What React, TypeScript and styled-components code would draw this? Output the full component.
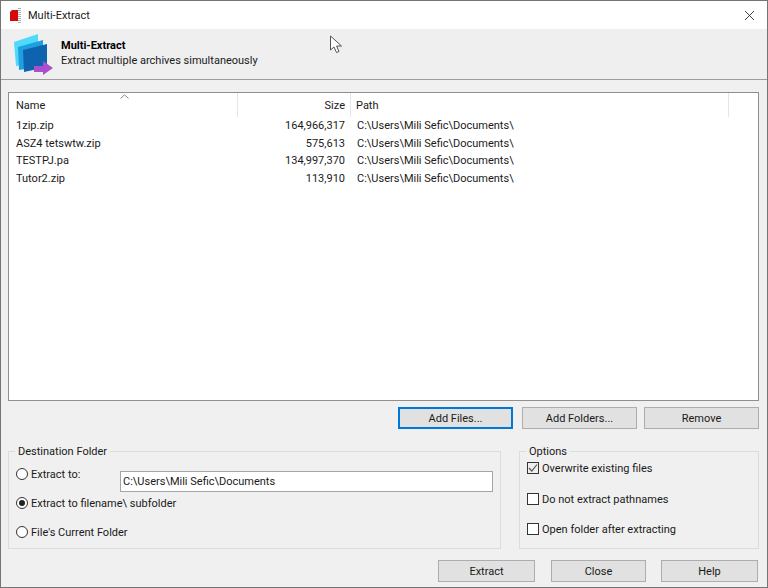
import React from 'react';
import styled, { createGlobalStyle } from 'styled-components';
import { X } from 'lucide-react';

const GlobalStyle = createGlobalStyle`
    html, body {
        margin: 0;
        padding: 0;
        background: #f0f0f0;
    }
    * {
        box-sizing: border-box;
    }
`;

const Window = styled.div`
    position: relative;
    width: 768px;
    height: 588px;
    display: flex;
    flex-direction: column;
    background: #f0f0f0;
    border: 1px solid #747474;
    font-family: Roboto, 'Noto Sans', sans-serif;
    font-size: 11px;
    color: #1a1a1a;
    overflow: hidden;
`;

const TitleBar = styled.div`
    flex: none;
    height: 28px;
    display: flex;
    align-items: center;
    padding: 0 9px 0 8px;
    background: #fff;
`;

const TitleText = styled.div`
    flex: 1;
    margin-left: 6px;
`;

const Banner = styled.div`
    flex: none;
    height: 51px;
    display: flex;
    align-items: flex-start;
    padding: 0 12px;
    background: #efefef;
    border-bottom: 1px solid #9c9c9c;
`;

const BannerText = styled.div`
    margin-left: 7px;
    padding-top: 9px;
    line-height: 15px;
`;

const BannerTitle = styled.div`
    font-weight: 700;
    color: #000;
`;

const Body = styled.div`
    flex: 1;
    display: flex;
    flex-direction: column;
    padding: 12px 8px 0 7px;
`;

const ListBox = styled.div`
    position: relative;
    height: 309px;
    background: #fff;
    border: 1px solid #8f8f8f;
`;

const ListHeader = styled.div`
    display: grid;
    grid-template-columns: 229px 113px 378px 1fr;
    height: 24px;
`;

const HeaderCell = styled.div<{ $right?: boolean; $inset?: number }>`
    display: flex;
    align-items: center;
    justify-content: ${(p) => (p.$right ? 'flex-end' : 'flex-start')};
    padding: 0 5px 0 ${(p) => p.$inset ?? 6}px;
    border-right: 1px solid #e5e5e5;
    &:last-child {
        border-right: none;
    }
`;

const SortCaret = styled.svg`
    position: absolute;
    left: 111px;
    top: 1px;
`;

const FileRow = styled.div`
    display: grid;
    grid-template-columns: 229px 113px 378px;
    height: 17.6px;
    line-height: 17.6px;
`;

const NameCell = styled.div`
    padding-left: 7px;
`;

const SizeCell = styled.div`
    padding-right: 6px;
    text-align: right;
`;

const PathCell = styled.div`
    padding-left: 6px;
`;

const ListButtons = styled.div`
    display: flex;
    justify-content: flex-end;
    margin-top: 6px;
`;

const Button = styled.div<{ $width: number; $gap?: number; $focused?: boolean }>`
    width: ${(p) => p.$width}px;
    height: 22px;
    margin-left: ${(p) => p.$gap ?? 0}px;
    display: flex;
    align-items: center;
    justify-content: center;
    background: #e1e1e1;
    border: ${(p) => (p.$focused ? '2px solid #0078d7' : '1px solid #adadad')};
`;

const Groups = styled.div`
    display: flex;
    justify-content: space-between;
    margin-top: 15px;
`;

const Group = styled.fieldset<{ $width: number }>`
    position: relative;
    width: ${(p) => p.$width}px;
    height: 98px;
    margin: 7px 0 0;
    padding: 0;
    border: 1px solid #dcdcdc;
`;

const GroupLegend = styled.div`
    position: absolute;
    left: 6px;
    top: -8px;
    padding: 0 3px;
    line-height: 15px;
    background: #f0f0f0;
`;

const DestinationRows = styled.div`
    display: grid;
    grid-template-rows: 29px 29px 29px;
    padding: 16px 0 0 7px;
`;

const OptionRows = styled.div`
    display: grid;
    grid-template-rows: 16px 15px 15px;
    row-gap: 15px;
    padding: 10px 0 0 7px;
`;

const ChoiceRow = styled.div`
    display: flex;
    align-items: flex-start;
    gap: 3px;
    line-height: 13px;
`;

const Radio = styled.span<{ $checked?: boolean }>`
    position: relative;
    width: 12px;
    height: 12px;
    flex: none;
    border: 1px solid #333;
    border-radius: 50%;
    background: #fff;
    &::after {
        content: '';
        display: ${(p) => (p.$checked ? 'block' : 'none')};
        position: absolute;
        inset: 2px;
        border-radius: 50%;
        background: #222;
    }
`;

const CheckBox = styled.span<{ $checked?: boolean }>`
    width: 12px;
    height: 12px;
    flex: none;
    display: flex;
    align-items: center;
    justify-content: center;
    border: 1px solid #333;
    background: ${(p) => (p.$checked ? '#eeeeee' : '#fff')};
`;

const PathInput = styled.div`
    position: absolute;
    left: 111px;
    top: 19px;
    width: 373px;
    height: 21px;
    padding-left: 2px;
    line-height: 19px;
    background: #fff;
    border: 1px solid #a5a5a5;
`;

const Footer = styled.div`
    display: flex;
    justify-content: flex-end;
    margin-top: 11px;
    padding-right: 1px;
`;

const Cursor = styled.svg`
    position: absolute;
    left: 328px;
    top: 34px;
`;

const files = [
    { name: '1zip.zip', size: '164,966,317' },
    { name: 'ASZ4 tetswtw.zip', size: '575,613' },
    { name: 'TESTPJ.pa', size: '134,997,370' },
    { name: 'Tutor2.zip', size: '113,910' },
];

const AppIcon = () => (
    <svg width="13" height="17" viewBox="0 0 13 17" style={{ display: 'block' }}>
        <path d="M10.5 1 V16" fill="none" stroke="#b0b0b0" strokeWidth="3" strokeDasharray="1 1" />
        <polygon points="1,5 3,3 9,3 9,14 1,14" fill="#d40a0a" />
    </svg>
);

// banner art: three stacked sheets with an arrow
const BannerIcon = () => (
    <svg width="41" height="44" viewBox="0 0 41 44" style={{ flex: 'none', marginTop: '4px' }}>
        <polygon points="1,9 25,1 25,30 3,33" fill="#4fd9fb" />
        <polygon points="5,14 30,7 30,33 6,37" fill="#1f9fe0" />
        <polygon points="10,17 34,11 34,34 11,39" fill="#0e63ae" />
        <polygon points="21,33 30,33 30,28 40,35 30,42 30,39 21,39" fill="#a94fd0" />
    </svg>
);

const Check = () => (
    <svg width="10" height="10" viewBox="0 0 10 10">
        <path d="M1 5 L3.8 8 L9 1.5" fill="none" stroke="#555" strokeWidth="1.2" />
    </svg>
);

const App: React.FC = () => {
    return (
        <>
            <GlobalStyle />
            <Window>
                <TitleBar>
                    <AppIcon />
                    <TitleText>Multi-Extract</TitleText>
                    <X size={17} strokeWidth={1.2} color="#222" />
                </TitleBar>
                <Banner>
                    <BannerIcon />
                    <BannerText>
                        <BannerTitle>Multi-Extract</BannerTitle>
                        <div>Extract multiple archives simultaneously</div>
                    </BannerText>
                </Banner>
                <Body>
                    <ListBox>
                        <ListHeader>
                            <HeaderCell $inset={7}>Name</HeaderCell>
                            <HeaderCell $right>Size</HeaderCell>
                            <HeaderCell $inset={5}>Path</HeaderCell>
                            <HeaderCell />
                        </ListHeader>
                        <SortCaret width="9" height="5" viewBox="0 0 9 5">
                            <path d="M0.5 4.5 L4.5 0.8 L8.5 4.5" fill="none" stroke="#888" />
                        </SortCaret>
                        {files.map((f) => (
                            <FileRow key={f.name}>
                                <NameCell>{f.name}</NameCell>
                                <SizeCell>{f.size}</SizeCell>
                                <PathCell>C:\Users\Mili Sefic\Documents\</PathCell>
                            </FileRow>
                        ))}
                    </ListBox>
                    <ListButtons>
                        <Button $width={115} $focused>Add Files...</Button>
                        <Button $width={115} $gap={9}>Add Folders...</Button>
                        <Button $width={115} $gap={7}>Remove</Button>
                    </ListButtons>
                    <Groups>
                        <Group $width={493}>
                            <GroupLegend>Destination Folder</GroupLegend>
                            <DestinationRows>
                                <ChoiceRow><Radio />Extract to:</ChoiceRow>
                                <ChoiceRow><Radio $checked />Extract to filename\ subfolder</ChoiceRow>
                                <ChoiceRow><Radio />File's Current Folder</ChoiceRow>
                            </DestinationRows>
                            <PathInput>C:\Users\Mili Sefic\Documents</PathInput>
                        </Group>
                        <Group $width={240}>
                            <GroupLegend>Options</GroupLegend>
                            <OptionRows>
                                <ChoiceRow><CheckBox $checked><Check /></CheckBox>Overwrite existing files</ChoiceRow>
                                <ChoiceRow><CheckBox />Do not extract pathnames</ChoiceRow>
                                <ChoiceRow><CheckBox />Open folder after extracting</ChoiceRow>
                            </OptionRows>
                        </Group>
                    </Groups>
                    <Footer>
                        <Button $width={97}>Extract</Button>
                        <Button $width={95} $gap={16}>Close</Button>
                        <Button $width={97} $gap={15}>Help</Button>
                    </Footer>
                </Body>
                <Cursor width="14" height="20" viewBox="0 0 14 20">
                    <path d="M1.5 1 L1.5 15 L5 12 L7.5 17.5 L10 16.5 L7.6 11 L12.5 11 Z" fill="#fff" stroke="#555" strokeWidth="1" />
                </Cursor>
            </Window>
        </>
    );
};

export default App;
